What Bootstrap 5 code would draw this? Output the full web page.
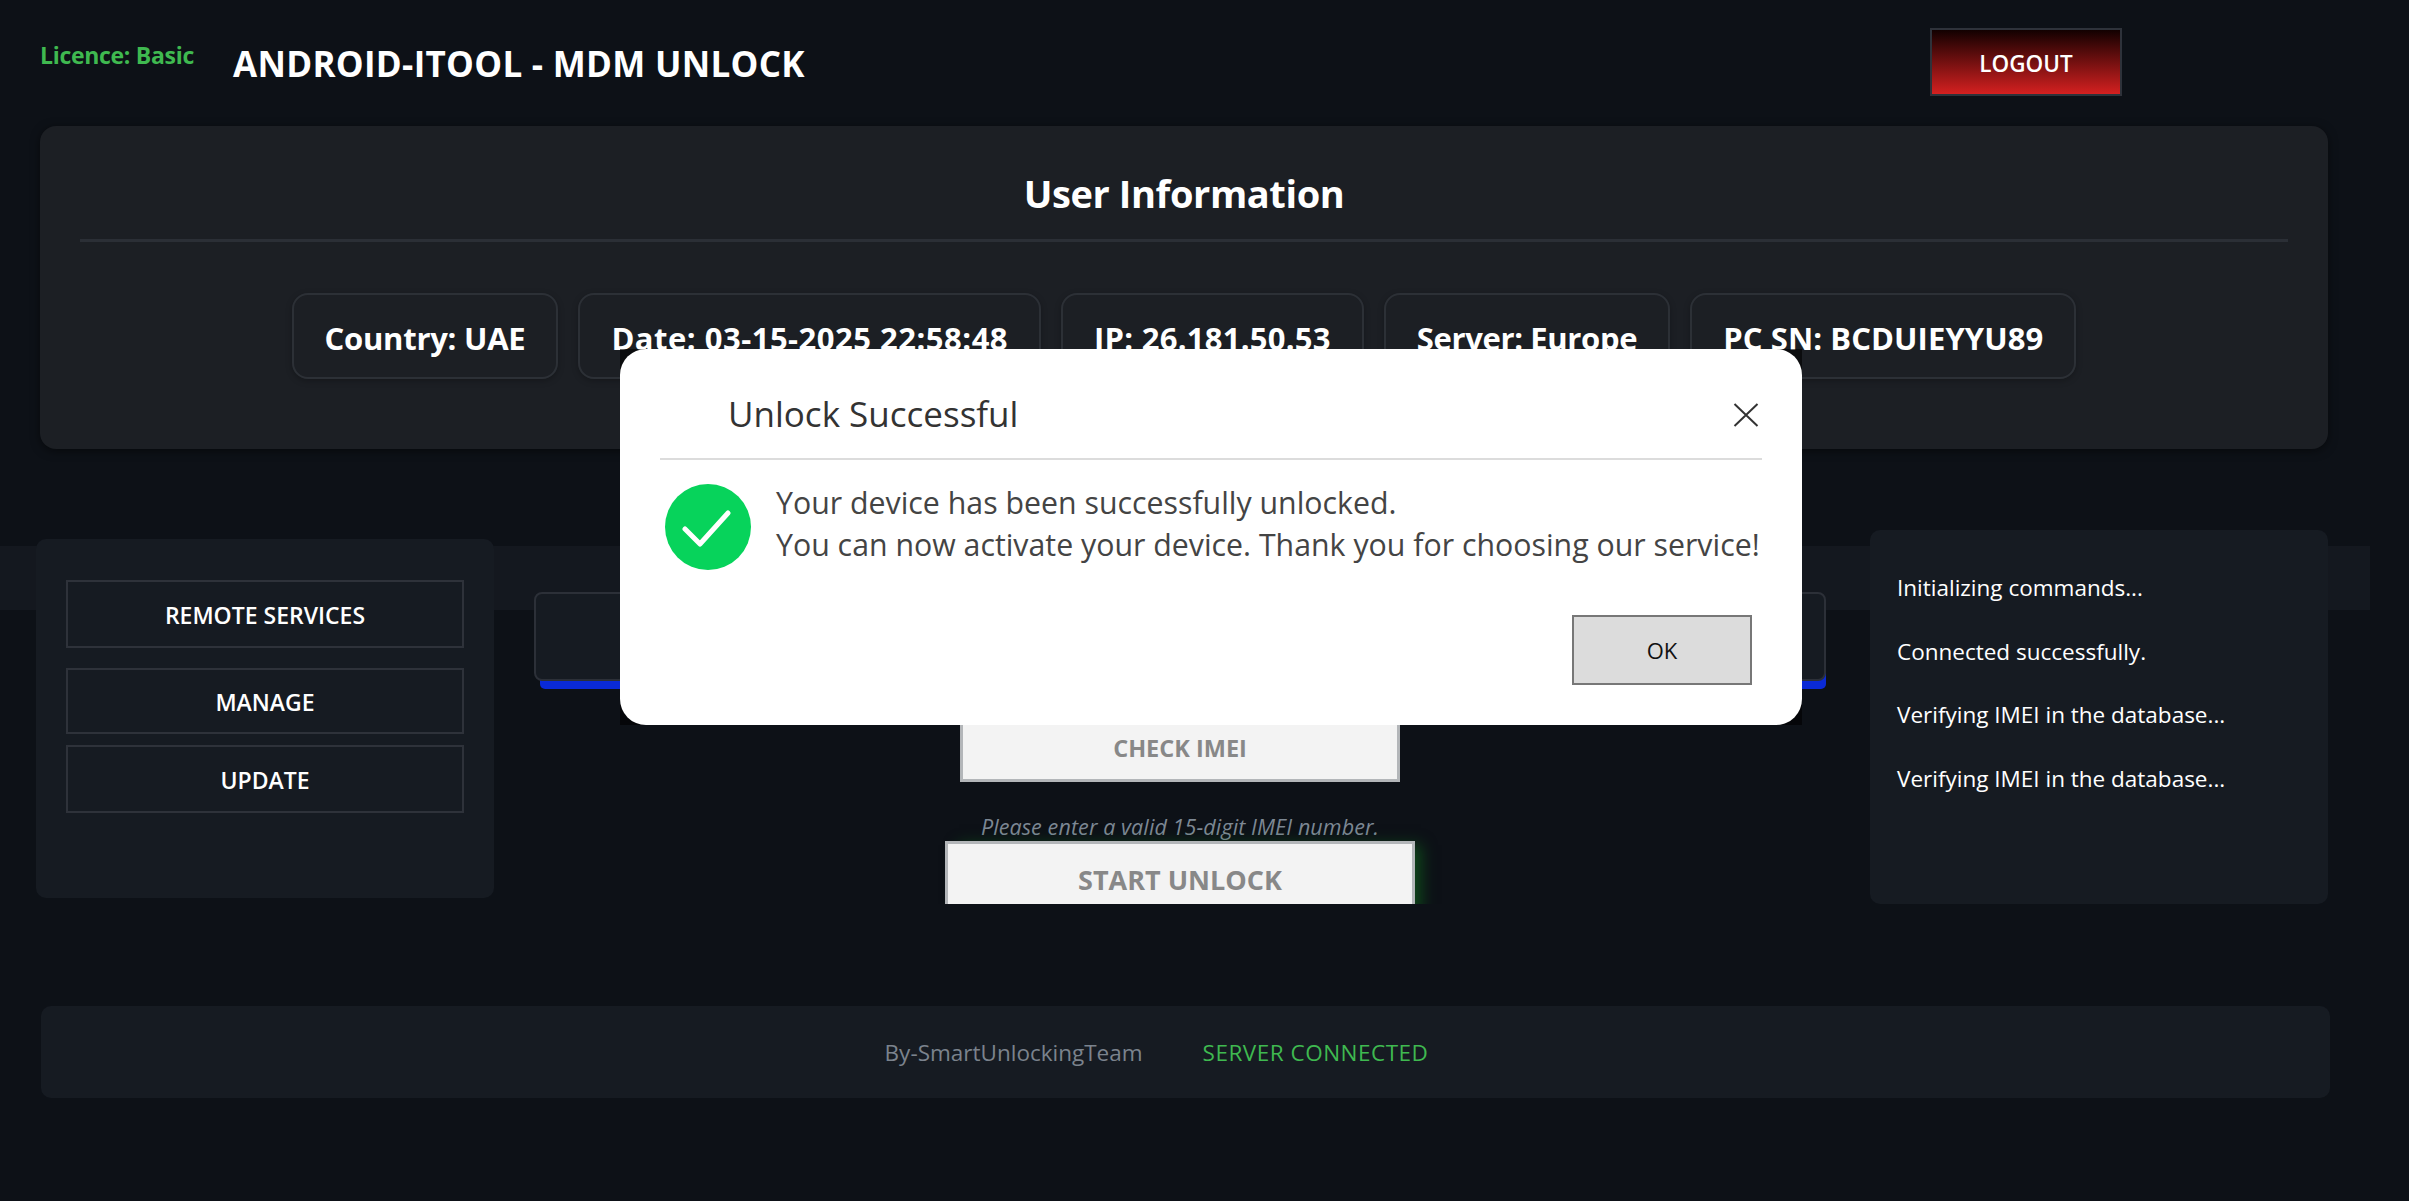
<!DOCTYPE html>
<html lang="en">
<head>
  <meta charset="UTF-8" />
  <title>ANDROID-ITOOL - MDM UNLOCK</title>
  <link href="https://cdn.jsdelivr.net/npm/bootstrap@5.3.0/dist/css/bootstrap.min.css" rel="stylesheet" />
  <style>
    body {
      background: #0d1117;
      color: #fff;
      font-family: "Open Sans", "Noto Sans", sans-serif;
      height: 1201px;
      overflow: hidden;
    }
    .top-bar { height: 126px; padding: 28px 287px 0 40px; }
    .licence-text { color: #3fb950; font-size: 23px; font-weight: 700; margin-top: 10px; line-height: 34px; width: 193px; letter-spacing: -.3px; }
    .app-title { font-size: 35px; font-weight: 700; line-height: 71px; margin: 0; letter-spacing: .3px; }
    .logout-btn {
      width: 192px; height: 68px; padding-top: 10px;
      background: linear-gradient(to bottom, #120000, #d42020);
      border: 2px solid #2e323a; border-radius: 0;
      color: #fff; font-size: 22.5px; font-weight: 600;
    }
    .user-panel {
      margin: 0 81px 0 40px; height: 323px; padding: 0 40px;
      background: #1c1f24; border-radius: 16px;
      box-shadow: 0 2px 10px rgba(0,0,0,.5);
    }
    .user-title { font-size: 38px; font-weight: 700; line-height: 134px; height: 116px; margin: 0; letter-spacing: -.4px; border-bottom: 3px solid #2b2f36; }
    .chip-row { gap: 20px; margin-top: 51px; }
    .info-chip {
      height: 86px; padding: 0 31px;
      border: 2px solid #2c3036; border-radius: 16px;
      font-size: 31px; font-weight: 700; line-height: 86px;
      box-shadow: 0 2px 6px rgba(0,0,0,.25);
    }
    .chip-country { letter-spacing: -.26px; }
    .chip-date { letter-spacing: .5px; }
    .chip-ip { letter-spacing: .25px; }
    .chip-server { letter-spacing: -.35px; }
    .chip-sn { letter-spacing: .09px; }
    .tool-band {
      margin: 97px 39px 0 0; height: 64px; padding-left: 36px;
      background: #14181f;
    }
    .side-panel {
      width: 458px; height: 359px; margin-top: -7px; padding: 41px 30px 0;
      background: #161b22; border-radius: 10px;
    }
    .side-btn {
      height: 68px; width: 398px; padding-top: 8px;
      background: transparent; border: 2px solid #2e323a; border-radius: 0;
      color: #fff; font-size: 23px; font-weight: 600;
    }
    .side-btn:hover { color: #fff; }
    .side-btn-manage { height: 66px; margin-top: 20px; }
    .side-btn-update { margin-top: 11px; }
    .center-col { width: 1292px; height: 358px; margin: 0 44px 0 40px; padding-top: 46px; }
    .imei-input {
      height: 89px; border: 2px solid #2c3038; border-radius: 8px;
      background: #161b22; box-shadow: 3px 11px 0 -3px #0a2ad6;
    }
    .btn.check-btn:disabled {
      width: 440px; height: 66px; margin-top: 35px; opacity: 1;
      background: #f3f3f3; border: 3px solid #b3b6b9; border-radius: 0;
      color: #888; font-size: 23.5px; font-weight: 700;
    }
    .hint-text { color: #7d8894; font-size: 21.5px; font-style: italic; margin: 32px 0 0; line-height: 26px; height: 27px; letter-spacing: .1px; }
    .btn.start-btn:disabled {
      width: 470px; height: 78px; opacity: 1;
      background: #f3f3f3; border: 3px solid #b3b6b9; border-radius: 0;
      color: #888; font-size: 27px; font-weight: 700; padding: 0;
      display: block;
      box-shadow: 10px 0 14px -4px rgba(15,130,30,.5);
    }
    .start-clip { height: 63px; }
    .log-panel {
      width: 458px; height: 374px; margin-top: -16px; padding: 38px 27px 0;
      background: #161b22; border-radius: 10px;
      font-size: 22.5px;
    }
    .log-line { height: 63.700px; line-height: 40px; }
    .foot-bar {
      margin: 396px 79px 0 41px; height: 92px; padding: 2px 58px 0 0;
      background: #161b22; border-radius: 10px;
      font-size: 22.5px; gap: 60px;
    }
    .foot-author { color: #7b838d; }
    .foot-status { color: #3fb950; letter-spacing: .5px; }

    .modal .unlock-dialog { max-width: 1182px; width: 1182px; margin: 349px 0 0 620px; background: rgba(0,0,0,.6); }
    .unlock-content { height: 376px; border: 0; border-radius: 26px; background: #fff; color: #444; }
    .unlock-head { height: 111px; margin: 0 40px; padding: 22px 0 0 68px; border-bottom: 2px solid #dcdcdc; }
    .unlock-title { font-size: 35px; font-weight: 500; color: #333; }
    .close-x { padding: 0; border: 0; background: none; line-height: 0; margin-right: 3px; }
    .unlock-body { padding: 24px 0 0 45px; gap: 25px; }
    .unlock-text { font-size: 30.3px; line-height: 42px; white-space: nowrap; margin-top: -2px; }
    .ok-btn {
      width: 180px; height: 70px; margin: 45px 50px 0 auto; display: block;
      background: #dcdcdc; border: 2px solid #777; border-radius: 0;
      color: #111; font-size: 22px;
    }
  </style>
</head>
<body>

  <header class="top-bar d-flex align-items-start">
    <div class="licence-text">Licence: Basic</div>
    <h1 class="app-title">ANDROID-ITOOL - MDM UNLOCK</h1>
    <button type="button" class="btn logout-btn ms-auto">LOGOUT</button>
  </header>

  <section class="user-panel">
    <h2 class="user-title text-center">User Information</h2>
    <div class="chip-row d-flex justify-content-center">
      <div class="info-chip chip-country">Country: UAE</div>
      <div class="info-chip chip-date">Date: 03-15-2025 22:58:48</div>
      <div class="info-chip chip-ip">IP: 26.181.50.53</div>
      <div class="info-chip chip-server">Server: Europe</div>
      <div class="info-chip chip-sn">PC SN: BCDUIEYYU89</div>
    </div>
  </section>

  <div class="tool-band d-flex align-items-start">
    <aside class="side-panel flex-shrink-0">
      <button type="button" class="btn side-btn d-block">REMOTE SERVICES</button>
      <button type="button" class="btn side-btn side-btn-manage d-block">MANAGE</button>
      <button type="button" class="btn side-btn side-btn-update d-block">UPDATE</button>
    </aside>

    <main class="center-col flex-shrink-0 overflow-hidden text-center">
      <input type="text" class="form-control imei-input" aria-label="IMEI" />
      <button type="button" class="btn check-btn" disabled>CHECK IMEI</button>
      <p class="hint-text">Please enter a valid 15-digit IMEI number.</p>
      <div class="start-clip d-flex justify-content-center">
        <button type="button" class="btn start-btn" disabled>START UNLOCK</button>
      </div>
    </main>

    <aside class="log-panel flex-shrink-0">
      <div class="log-line">Initializing commands...</div>
      <div class="log-line">Connected successfully.</div>
      <div class="log-line">Verifying IMEI in the database...</div>
      <div class="log-line">Verifying IMEI in the database...</div>
    </aside>
  </div>

  <footer class="foot-bar d-flex justify-content-center align-items-center">
    <span class="foot-author">By-SmartUnlockingTeam</span>
    <span class="foot-status">SERVER CONNECTED</span>
  </footer>

  <div class="modal d-block" tabindex="-1">
    <div class="modal-dialog unlock-dialog">
      <div class="modal-content unlock-content">
        <div class="unlock-head d-flex align-items-center justify-content-between">
          <h5 class="modal-title unlock-title">Unlock Successful</h5>
          <button type="button" class="close-x" aria-label="Close">
            <svg width="26" height="26" viewBox="0 0 26 26"><path d="M1.500 2 24.500 24M24.500 2 1.500 24" stroke="#333" stroke-width="2" fill="none"/></svg>
          </button>
        </div>
        <div class="unlock-body d-flex align-items-start">
          <svg class="flex-shrink-0" width="86" height="86" viewBox="0 0 86 86">
            <circle cx="43" cy="43" r="43" fill="#07d35b"/>
            <path d="M20 45 35 60 63 29" stroke="#fff" stroke-width="5" stroke-linecap="round" stroke-linejoin="round" fill="none"/>
          </svg>
          <div class="unlock-text">Your device has been successfully unlocked.<br />You can now activate your device. Thank you for choosing our service!</div>
        </div>
        <button type="button" class="btn ok-btn">OK</button>
      </div>
    </div>
  </div>

  <script src="https://cdn.jsdelivr.net/npm/bootstrap@5.3.0/dist/js/bootstrap.bundle.min.js"></script>
</body>
</html>
